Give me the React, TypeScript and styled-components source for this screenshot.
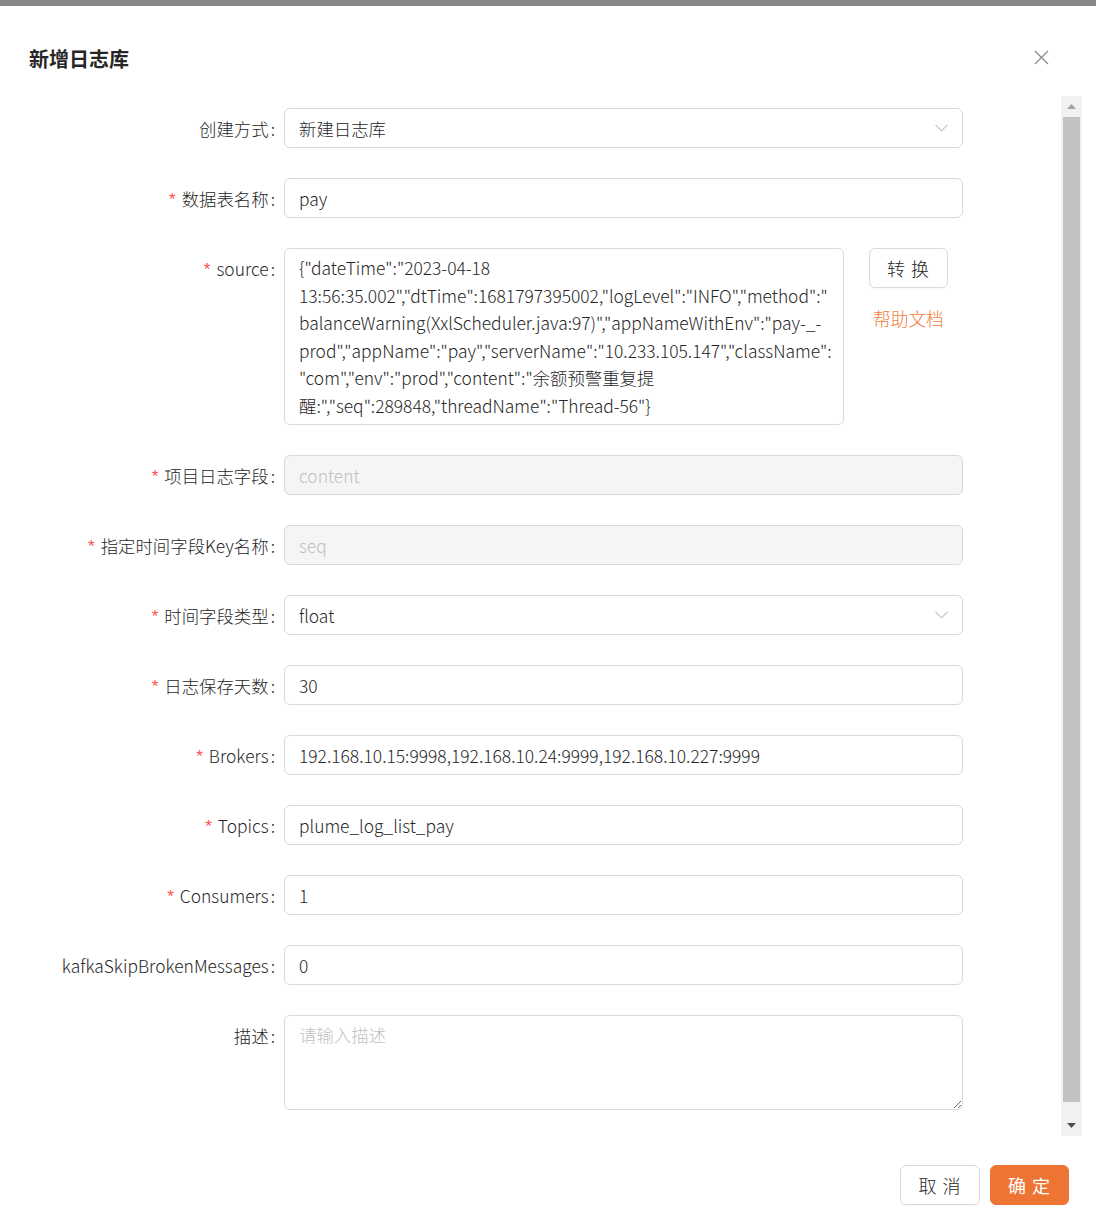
import React from 'react';
import styled, { createGlobalStyle } from 'styled-components';

const GlobalStyle = createGlobalStyle`
  body {
    margin: 0;
    background: #fff;
    font-family: "Noto Sans CJK SC", "Noto Sans", sans-serif;
    color: #262626;
  }
`;

const sourceText = [
  '{"dateTime":"2023-04-18',
  '13:56:35.002","dtTime":1681797395002,"logLevel":"INFO","method":"',
  'balanceWarning(XxlScheduler.java:97)","appNameWithEnv":"pay-_-',
  'prod","appName":"pay","serverName":"10.233.105.147","className":',
  '"com","env":"prod","content":"余额预警重复提',
  '醒:","seq":289848,"threadName":"Thread-56"}',
].join('\n');

const FONT_SIZE = 17.4;
const WEIGHT = 300;
const TEXT = '#262626';

const Page = styled.div`
  width: 1096px;
  height: 1227px;
  box-sizing: border-box;
  border-top: 6px solid #878787;
  display: flex;
  flex-direction: column;
  overflow: hidden;
`;

const Header = styled.div`
  height: 90px;
  flex-shrink: 0;
  display: flex;
  justify-content: space-between;
  align-items: flex-start;
  padding: 39px 46px 0 29px;
  box-sizing: border-box;
`;

const Title = styled.div`
  font-size: 20px;
  font-weight: 700;
  line-height: 28px;
  color: #262626;
`;

const CloseButton = styled.div`
  width: 18px;
  height: 18px;
  margin-top: 3px;
  display: flex;
  align-items: center;
  justify-content: center;
  cursor: pointer;
`;

const BodyWrap = styled.div`
  height: 1040px;
  width: 1082px;
  flex-shrink: 0;
  display: flex;
`;

const Body = styled.div`
  flex: 1;
  overflow: hidden;
  padding: 12px 0 14px;
  box-sizing: border-box;
`;

const ScrollTrack = styled.div`
  width: 21px;
  height: 100%;
  background: #f1f1f1;
  display: flex;
  flex-direction: column;
  align-items: center;
`;

const ScrollArrow = styled.div`
  width: 21px;
  height: 21px;
  flex-shrink: 0;
  display: flex;
  align-items: center;
  justify-content: center;
`;

const ScrollThumb = styled.div`
  width: 17px;
  height: 985px;
  background: #c1c1c1;
`;

const ScrollRest = styled.div`
  flex: 1;
`;

const Row = styled.div`
  display: flex;
  align-items: flex-start;
  margin-bottom: 30px;
`;

const Label = styled.label`
  width: 275px;
  flex-shrink: 0;
  height: 40px;
  display: flex;
  align-items: center;
  justify-content: flex-end;
  font-size: ${FONT_SIZE}px;
  font-weight: ${WEIGHT};
  color: ${TEXT};
  white-space: nowrap;
`;

const Star = styled.span`
  color: #ff4d4f;
  margin-right: 6px;
  font-size: 17px;
  font-family: "Liberation Sans", sans-serif;
  line-height: 1;
  padding-top: 3px;
`;

const Colon = styled.span`
  margin-left: 2px;
`;

const Control = styled.div`
  margin-left: 9px;
  display: flex;
  align-items: flex-start;
`;

const fieldBase = `
  box-sizing: border-box;
  border: 1px solid #d9d9d9;
  border-radius: 6px;
  font-family: "Noto Sans CJK SC", "Noto Sans", sans-serif;
  font-size: ${FONT_SIZE}px;
  font-weight: ${WEIGHT};
  color: ${TEXT};
  outline: none;
  &::placeholder { color: #bfbfbf; }
`;

const Input = styled.input<{ $width?: number }>`
  ${fieldBase}
  width: ${p => p.$width ?? 679}px;
  height: 40px;
  padding: 0 14px;
  background: #fff;
  &:disabled {
    background: #f5f5f5;
    color: #bfbfbf;
  }
`;

const TextArea = styled.textarea<{ $width: number; $height: number; $resize?: boolean }>`
  ${fieldBase}
  width: ${p => p.$width}px;
  height: ${p => p.$height}px;
  padding: 5px 14px;
  line-height: 27.5px;
  resize: ${p => (p.$resize ? 'vertical' : 'none')};
  white-space: pre;
  overflow: hidden;
  display: block;
`;

const SelectBox = styled.div`
  box-sizing: border-box;
  width: 679px;
  height: 40px;
  border: 1px solid #d9d9d9;
  border-radius: 6px;
  padding: 0 14px;
  display: flex;
  align-items: center;
  justify-content: space-between;
  font-size: ${FONT_SIZE}px;
  font-weight: ${WEIGHT};
  color: ${TEXT};
`;

const Side = styled.div`
  margin-left: 25px;
  display: flex;
  flex-direction: column;
  align-items: flex-start;
`;

const Button = styled.button<{ $primary?: boolean; $width?: number }>`
  box-sizing: border-box;
  width: ${p => p.$width ?? 80}px;
  height: 40px;
  border-radius: 6px;
  border: 1px solid ${p => (p.$primary ? '#ee7433' : '#d9d9d9')};
  background: ${p => (p.$primary ? '#ee7433' : '#fff')};
  color: ${p => (p.$primary ? '#fff' : TEXT)};
  font-family: "Noto Sans CJK SC", sans-serif;
  font-size: 18px;
  font-weight: ${p => (p.$primary ? 400 : WEIGHT)};
  letter-spacing: 1px;
  box-shadow: 0 2px 0 rgba(0, 0, 0, 0.02);
  cursor: pointer;
  padding: 0;
`;

const HelpLink = styled.a`
  margin: 17px 0 0 4px;
  font-size: 17.7px;
  font-weight: ${WEIGHT};
  line-height: 26px;
  color: #f07c3a;
  text-decoration: none;
  cursor: pointer;
`;

const Footer = styled.div`
  flex: 1;
  display: flex;
  justify-content: flex-end;
  align-items: flex-start;
  gap: 10px;
  padding: 29px 27px 0 0;
`;

const Chevron = () => (
  <svg width="13" height="8" viewBox="0 0 13 8" fill="none">
    <path d="M0.5 0.8 L6.5 6.8 L12.5 0.8" stroke="#bfbfbf" strokeWidth="1.1" />
  </svg>
);

const CloseIcon = () => (
  <svg width="15" height="15" viewBox="0 0 15 15" fill="none">
    <path d="M1 1 L14 14 M14 1 L1 14" stroke="#8c8c8c" strokeWidth="1.4" />
  </svg>
);

const Arrow = ({ up }: { up?: boolean }) => (
  <svg width="9" height="5" viewBox="0 0 9 5">
    <path d={up ? 'M0 5 L4.5 0 L9 5 Z' : 'M0 0 L9 0 L4.5 5 Z'} fill={up ? '#a3a3a3' : '#505050'} />
  </svg>
);

interface FieldProps {
  label: string;
  required?: boolean;
  children: React.ReactNode;
}

const Field: React.FC<FieldProps> = ({ label, required, children }) => (
  <Row>
    <Label>
      {required && <Star>*</Star>}
      {label}
      <Colon>:</Colon>
    </Label>
    <Control>{children}</Control>
  </Row>
);

export default function App() {
  return (
    <>
      <GlobalStyle />
      <Page>
        <Header>
          <Title>新增日志库</Title>
          <CloseButton><CloseIcon /></CloseButton>
        </Header>
        <BodyWrap>
          <Body>
            <Field label="创建方式">
              <SelectBox>
                <span>新建日志库</span>
                <Chevron />
              </SelectBox>
            </Field>
            <Field label="数据表名称" required>
              <Input defaultValue="pay" />
            </Field>
            <Field label="source" required>
              <TextArea $width={560} $height={177} defaultValue={sourceText} />
              <Side>
                <Button $width={79}>转 换</Button>
                <HelpLink>帮助文档</HelpLink>
              </Side>
            </Field>
            <Field label="项目日志字段" required>
              <Input disabled defaultValue="content" />
            </Field>
            <Field label="指定时间字段Key名称" required>
              <Input disabled defaultValue="seq" />
            </Field>
            <Field label="时间字段类型" required>
              <SelectBox>
                <span>float</span>
                <Chevron />
              </SelectBox>
            </Field>
            <Field label="日志保存天数" required>
              <Input defaultValue="30" />
            </Field>
            <Field label="Brokers" required>
              <Input defaultValue="192.168.10.15:9998,192.168.10.24:9999,192.168.10.227:9999" />
            </Field>
            <Field label="Topics" required>
              <Input defaultValue="plume_log_list_pay" />
            </Field>
            <Field label="Consumers" required>
              <Input defaultValue="1" />
            </Field>
            <Field label="kafkaSkipBrokenMessages">
              <Input defaultValue="0" />
            </Field>
            <Field label="描述">
              <TextArea $width={679} $height={95} $resize placeholder="请输入描述" />
            </Field>
          </Body>
          <ScrollTrack>
            <ScrollArrow><Arrow up /></ScrollArrow>
            <ScrollThumb />
            <ScrollRest />
            <ScrollArrow><Arrow /></ScrollArrow>
          </ScrollTrack>
        </BodyWrap>
        <Footer>
          <Button>取 消</Button>
          <Button $primary $width={79}>确 定</Button>
        </Footer>
      </Page>
    </>
  );
}
